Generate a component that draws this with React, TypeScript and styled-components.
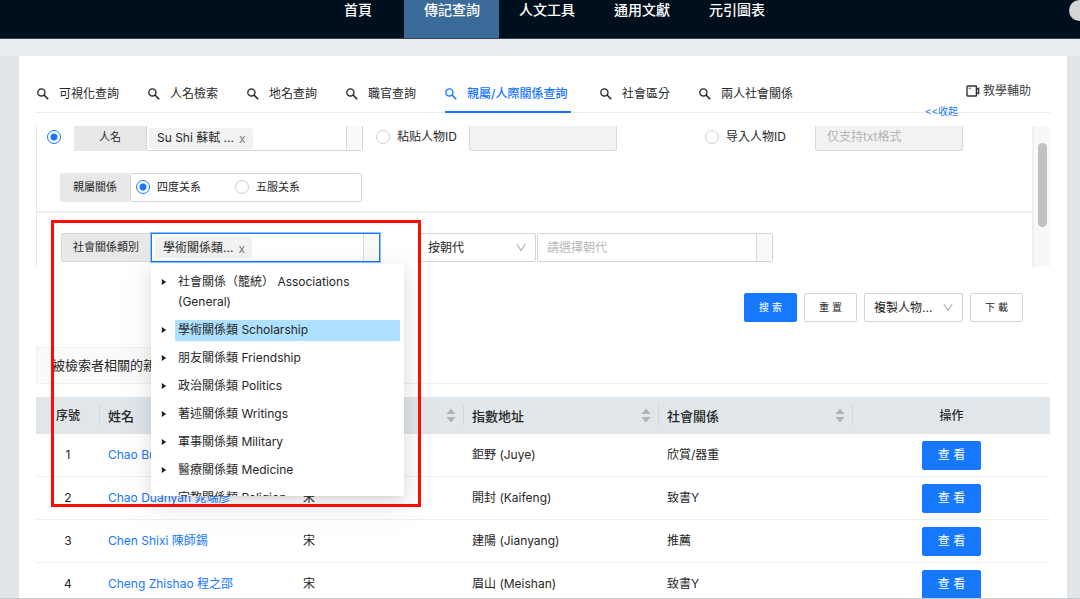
import React from "react";
import styled, { createGlobalStyle, css } from "styled-components";

const GlobalStyle = createGlobalStyle`
  *, *::before, *::after { box-sizing: border-box; }
  html, body { height: 100%; }
  body {
    margin: 0;
    background: #e0e5e9;
    color: #262626;
    font-family: Inter, "Noto Sans CJK TC", "Noto Sans CJK SC", sans-serif;
    font-size: 12px;
    line-height: 20px;
  }
  #root { height: 100%; }
  button, input, select { font: inherit; color: inherit; }
`;

const Page = styled.div`
  position: relative;
  height: 100%;
  overflow: hidden;
  border-bottom: 1px solid #c8cbce;
`;

const Header = styled.header`
  position: relative;
  height: 39px;
  padding-left: 30%;
  background: #000f1e;
  border-bottom: 1px solid #3a4552;
  overflow: hidden;
`;

const Nav = styled.nav`
  display: flex;
  height: 100%;
`;

const NavLink = styled.a<{ $active?: boolean }>`
  padding: 0 19px 18px 20px;
  font-size: 14px;
  font-weight: 500;
  line-height: 20px;
  color: #fff;
  text-decoration: none;
  background: ${(p) => (p.$active ? "#3b6b99" : "transparent")};
  &:first-child { margin-right: 13px; }
`;

const Avatar = styled.span`
  position: absolute;
  top: 0;
  right: -10px;
  width: 21px;
  height: 21px;
  border-radius: 50%;
  background: #d2d4d6;
`;

const Band = styled.div`
  height: 17px;
  background: #e9edf1;
`;

const Card = styled.main`
  margin: 0 13px 0 19px;
  padding: 24px 17px 0;
  background: #fff;
`;

const TabBar = styled.div`
  display: flex;
  align-items: flex-start;
  height: 33px;
  padding-left: 1px;
  border-bottom: 1px solid #ececec;
`;

const Tab = styled.a<{ $active?: boolean }>`
  display: flex;
  gap: 10px;
  align-items: center;
  height: 33px;
  min-width: ${(p) => (p.$active ? 126 : 0)}px;
  margin-right: 29px;
  padding-bottom: 4px;
  white-space: nowrap;
  text-decoration: none;
  color: ${(p) => (p.$active ? "#1677ff" : "#262626")};
  font-weight: ${(p) => (p.$active ? 500 : 400)};
  border-bottom: 2px solid ${(p) => (p.$active ? "#1677ff" : "transparent")};
  svg { width: 12px; height: 12px; }
`;

const TabSide = styled.div`
  display: flex;
  flex-direction: column;
  align-items: flex-end;
  margin-left: auto;
  padding: 1px 19px 0 0;
`;

const HelpLink = styled.a`
  display: flex;
  gap: 3px;
  align-items: center;
  color: #434343;
  text-decoration: none;
  white-space: nowrap;
  svg { width: 14px; height: 12px; }
`;

const Collapse = styled.button`
  margin-right: 73px;
  padding: 0;
  border: 0;
  background: none;
  font-size: 10px;
  line-height: 20px;
  white-space: nowrap;
  color: #1677ff;
`;

const Filters = styled.form`
  margin-top: 13px;
`;

const FilterScroll = styled.div`
  display: flex;
  height: 141px;
`;

const FilterRows = styled.div`
  flex: 1;
  min-width: 0;
  border-left: 1px solid #e8e8e8;
`;

const ScrollTrack = styled.div`
  width: 18px;
  padding: 17px 3px 0 4px;
  border-left: 2px solid #efefef;
  background: #f8f8f8;
`;

const ScrollThumb = styled.div`
  height: 84px;
  border-radius: 5px;
  background: #c1c1c1;
`;

const PersonRow = styled.div`
  display: flex;
  height: 25px;
  padding-left: 10px;
`;

const KinRow = styled.div`
  display: flex;
  height: 38px;
  margin-top: 22px;
  padding-left: 23px;
`;

const PersonGroup = styled.div<{ $width: number; $gap?: number }>`
  display: flex;
  gap: ${(p) => p.$gap ?? 0}px;
  width: ${(p) => p.$width}px;
`;

const Radio = styled.input`
  appearance: none;
  flex: none;
  width: 14px;
  height: 14px;
  margin: 0;
  border: 1px solid #d0d0d0;
  border-radius: 50%;
  background: #fff;
  &:checked {
    border-color: #1677ff;
    background: radial-gradient(circle, #1677ff 3px, #fff 4px);
  }
`;

const PersonLabel = styled.label`
  width: 72px;
  margin-left: 13px;
  height: 25px;
  font-size: 11px;
  line-height: 22px;
  text-align: center;
  background: #e8e8e8;
`;

const RadioLabel = styled.label`
  display: flex;
  align-items: center;
  gap: 7px;
  height: 22px;
  white-space: nowrap;
`;

const DisabledInput = styled.input`
  width: 148px;
  height: 25px;
  padding: 0 11px 4px;
  border: 1px solid #d9d9d9;
  border-top: 0;
  border-radius: 0 0 3px 3px;
  background: #f2f2f2;
  &::placeholder { color: #b4b4b4; opacity: 1; }
`;

const TagSelect = styled.div<{ $cut?: boolean; $focus?: boolean }>`
  position: relative;
  display: flex;
  align-items: center;
  border: 1px solid #d4d4d4;
  background: #fff;
  ${(p) => p.$cut && css`
    width: 217px;
    height: 25px;
    padding-left: 2px;
    border-top: 0;
    border-radius: 0 0 3px 3px;
  `}
  ${(p) => p.$focus && css`
    width: 229px;
    height: 29px;
    padding-left: 3px;
    border-color: #1677ff;
    box-shadow: 0 0 0 1px #8fc0ff;
  `}
`;

const Tag = styled.span`
  display: flex;
  gap: 5px;
  align-items: center;
  height: 21px;
  padding: 0 7px 0 8px;
  border-radius: 2px;
  background: #f2f2f2;
  white-space: nowrap;
`;

const TagRemove = styled.button`
  padding: 2px 0 0;
  border: 0;
  background: none;
  line-height: 18px;
  color: #7a7a7a;
`;

const BareInput = styled.input`
  flex: 1;
  min-width: 0;
  height: 100%;
  padding: 0 0 0 9px;
  border: 0;
  outline: 0;
  background: none;
  &::placeholder { color: #b8b8b8; opacity: 1; }
`;

const Addon = styled.span`
  flex: none;
  align-self: stretch;
  width: 16px;
  border-left: 1px solid #d9d9d9;
  background: #f9f9f9;
`;

const FieldLabel = styled.label<{ $wide?: boolean }>`
  width: ${(p) => (p.$wide ? 90 : 70)}px;
  height: 29px;
  font-size: 11px;
  text-align: center;
  white-space: nowrap;
  border-radius: 2px 0 0 2px;
  background: #e8e8e8;
  border: 1px solid ${(p) => (p.$wide ? "#d6d6d6" : "#e8e8e8")};
  line-height: 26px;
`;

const KinOptions = styled.div`
  display: flex;
  align-items: center;
  gap: 34px;
  width: 232px;
  height: 29px;
  padding: 0 0 2px 5px;
  border: 1px solid #d4d4d4;
  border-radius: 3px;
  font-size: 11px;
`;

const AssocRow = styled.div`
  display: flex;
  padding: 20px 0 0 24px;
  border-top: 2px solid #efefef;
`;

const SelectWrap = styled.span<{ $width: number }>`
  position: relative;
  display: flex;
  width: ${(p) => p.$width}px;
  height: 29px;
  svg {
    position: absolute;
    top: 10px;
    right: 10px;
    width: 10px;
    height: 9px;
    pointer-events: none;
  }
`;

const Select = styled.select`
  appearance: none;
  width: 100%;
  height: 100%;
  padding: 0 20px 0 9px;
  border: 1px solid #d4d4d4;
  border-radius: 2px;
  background: #fff;
`;

const DynastySelect = styled(SelectWrap)`
  margin-left: 38px;
`;

const DynastyInput = styled.div`
  display: flex;
  width: 236px;
  height: 29px;
  margin-left: 1px;
  border: 1px solid #d4d4d4;
  border-radius: 2px;
`;

const Menu = styled.ul`
  position: absolute;
  z-index: 2;
  top: 30px;
  left: -1px;
  width: 253px;
  height: 232px;
  margin: 0;
  padding: 8px 4px 0 9px;
  overflow: hidden;
  list-style: none;
  background: #fff;
  box-shadow: 0 3px 6px -4px rgba(0, 0, 0, 0.12), 0 6px 16px rgba(0, 0, 0, 0.08), 0 9px 28px 8px rgba(0, 0, 0, 0.05);
`;

const MenuItem = styled.li`
  display: flex;
  margin-bottom: 7px;
  svg { flex: none; width: 6px; height: 8px; margin: 6px 8px 0 1px; }
`;

const MenuText = styled.span<{ $selected?: boolean }>`
  flex: 1;
  padding: 0 3px 1px;
  border-radius: 1px;
  background: ${(p) => (p.$selected ? "#aee0ff" : "transparent")};
`;

const Actions = styled.div`
  display: flex;
  justify-content: flex-end;
  gap: 7px;
  margin-top: 26px;
  padding-right: 27px;
`;

const Button = styled.button<{ $primary?: boolean; $table?: boolean }>`
  width: ${(p) => (p.$table ? 59 : 53)}px;
  height: 29px;
  padding: 0 0 1px;
  border: 1px solid ${(p) => (p.$primary ? "#1677ff" : "#d4d4d4")};
  border-radius: 2px;
  background: ${(p) => (p.$primary ? "#1677ff" : "#fff")};
  color: ${(p) => (p.$primary ? "#fff" : "#262626")};
  font-size: ${(p) => (p.$table ? 12 : 10)}px;
  line-height: 20px;
  white-space: pre;
  vertical-align: middle;
`;

const ResultTabs = styled.div`
  display: flex;
  margin-top: 25px;
  border-bottom: 1px solid #f0f0f0;
`;

const ResultTab = styled.h2`
  margin: 0;
  padding: 0 15px;
  border: 1px solid #f0f0f0;
  border-bottom: 0;
  background: #fafafa;
  font-size: 13px;
  font-weight: 400;
  line-height: 35px;
`;

const Table = styled.table`
  width: 100%;
  margin-top: 13px;
  table-layout: fixed;
  border-collapse: separate;
  border-spacing: 0;
`;

const Th = styled.th<{ $center?: boolean }>`
  position: relative;
  height: 37px;
  padding: 0 8px;
  background: #e0e6ea;
  font-size: ${(p) => (p.$center ? 12 : 13)}px;
  font-weight: 500;
  text-align: ${(p) => (p.$center ? "center" : "left")};
  &:not(:last-child)::after {
    content: "";
    position: absolute;
    top: 8px;
    right: 0;
    width: 1px;
    height: 20px;
    background: #d0d5d9;
  }
`;

const HeadCell = styled.span`
  display: flex;
  align-items: center;
  justify-content: space-between;
  svg { width: 10px; height: 15px; }
`;

const Td = styled.td<{ $center?: boolean }>`
  height: 43px;
  padding: 0 8px;
  border-bottom: 1px solid #efefef;
  text-align: ${(p) => (p.$center ? "center" : "left")};
  white-space: nowrap;
  a { color: #1677ff; text-decoration: none; }
`;

const Highlight = styled.div`
  position: absolute;
  z-index: 3;
  top: 220px;
  left: 51px;
  width: 370px;
  height: 287px;
  border: 3px solid #fb0d05;
  pointer-events: none;
`;

const SearchIcon = () => (
  <svg viewBox="0 0 12 12" fill="none" stroke="currentColor" strokeWidth="1.3" aria-hidden="true">
    <circle cx="4.4" cy="4.4" r="3.6" />
    <path d="M7 7l4.2 4.2" strokeWidth="1.6" />
  </svg>
);

const VideoIcon = () => (
  <svg viewBox="0 0 14 12" fill="none" stroke="#333" aria-hidden="true">
    <rect x="1" y="1" width="9.4" height="10" rx="0.6" strokeWidth="1.4" />
    <path d="M2.8 3.2h2" strokeWidth="1" />
    <path d="M10.4 4.3l2.2-.9v5.2l-2.2-.9" strokeWidth="1.4" />
  </svg>
);

const ChevronIcon = () => (
  <svg viewBox="0 0 10 9" fill="none" stroke="#b0b0b0" strokeWidth="1.1" aria-hidden="true">
    <path d="M.8 1l4.2 6.4L9.2 1" />
  </svg>
);

const CaretIcon = () => (
  <svg viewBox="0 0 6 8" fill="#222" aria-hidden="true">
    <path d="M.8 1l4.4 3-4.4 3z" />
  </svg>
);

const SortIcon = () => (
  <svg viewBox="0 0 10 15" fill="#b0b3b5" aria-hidden="true">
    <path d="M5 .5L9.6 6H.4zM5 14.5L9.6 9H.4z" />
  </svg>
);

const navItems = ["首頁", "傳記查詢", "人文工具", "通用文獻", "元引圖表"];
const tabs = ["可視化查詢", "人名檢索", "地名查詢", "職官查詢", "親屬/人際關係查詢", "社會區分", "兩人社會關係"];
const categories = [
  "社會關係（籠統） Associations (General)",
  "學術關係類 Scholarship",
  "朋友關係類 Friendship",
  "政治關係類 Politics",
  "著述關係類 Writings",
  "軍事關係類 Military",
  "醫療關係類 Medicine",
  "宗教關係類 Religion",
];
const rows = [
  ["Chao Buzhi 晁補之", "宋", "鉅野 (Juye)", "欣賞/器重"],
  ["Chao Duanyan 晁端彥", "宋", "開封 (Kaifeng)", "致書Y"],
  ["Chen Shixi 陳師錫", "宋", "建陽 (Jianyang)", "推薦"],
  ["Cheng Zhishao 程之邵", "宋", "眉山 (Meishan)", "致書Y"],
];

export default function App() {
  return (
    <Page>
      <GlobalStyle />
      <Header>
        <Nav>
          {navItems.map((item, i) => (
            <NavLink key={item} href="#" $active={i === 1}>{item}</NavLink>
          ))}
        </Nav>
        <Avatar />
      </Header>
      <Band />
      <Card>
        <TabBar>
          {tabs.map((tab, i) => (
            <Tab key={tab} href="#" $active={i === 4}>
              <SearchIcon />
              {tab}
            </Tab>
          ))}
          <TabSide>
            <HelpLink href="#"><VideoIcon />教學輔助</HelpLink>
            <Collapse type="button">&lt;&lt;收起</Collapse>
          </TabSide>
        </TabBar>

        <Filters onSubmit={(e) => e.preventDefault()}>
          <FilterScroll>
            <FilterRows>
              <PersonRow>
                <PersonGroup $width={329}>
                  <RadioLabel>
                    <Radio type="radio" name="source" defaultChecked aria-label="人名" />
                  </RadioLabel>
                  <PersonLabel htmlFor="person">人名</PersonLabel>
                  <TagSelect $cut>
                    <Tag>Su Shi 蘇軾 ...<TagRemove type="button">x</TagRemove></Tag>
                    <BareInput id="person" />
                    <Addon />
                  </TagSelect>
                </PersonGroup>
                <PersonGroup $width={329} $gap={12}>
                  <RadioLabel><Radio type="radio" name="source" />粘贴人物ID</RadioLabel>
                  <DisabledInput disabled aria-label="粘贴人物ID" />
                </PersonGroup>
                <PersonGroup $width={260} $gap={29}>
                  <RadioLabel><Radio type="radio" name="source" />导入人物ID</RadioLabel>
                  <DisabledInput disabled aria-label="导入人物ID" placeholder="仅支持txt格式" />
                </PersonGroup>
              </PersonRow>
              <KinRow>
                <FieldLabel as="span">親屬關係</FieldLabel>
                <KinOptions role="radiogroup" aria-label="親屬關係">
                  <RadioLabel><Radio type="radio" name="kin" defaultChecked />四度关系</RadioLabel>
                  <RadioLabel><Radio type="radio" name="kin" />五服关系</RadioLabel>
                </KinOptions>
              </KinRow>
              <AssocRow>
                <FieldLabel $wide htmlFor="assoc">社會關係類別</FieldLabel>
                <TagSelect $focus>
                  <Tag>學術關係類...<TagRemove type="button">x</TagRemove></Tag>
                  <BareInput id="assoc" />
                  <Addon />
                  <Menu>
                    {categories.map((name, i) => (
                      <MenuItem key={name}>
                        <CaretIcon />
                        <MenuText $selected={i === 1}>{name}</MenuText>
                      </MenuItem>
                    ))}
                  </Menu>
                </TagSelect>
                <DynastySelect $width={118}>
                  <Select aria-label="年代類型"><option>按朝代</option></Select>
                  <ChevronIcon />
                </DynastySelect>
                <DynastyInput>
                  <BareInput aria-label="朝代" placeholder="請選擇朝代" />
                  <Addon />
                </DynastyInput>
              </AssocRow>
            </FilterRows>
            <ScrollTrack><ScrollThumb /></ScrollTrack>
          </FilterScroll>
          <Actions>
            <Button type="submit" $primary>搜 索</Button>
            <Button type="reset">重 置</Button>
            <SelectWrap $width={99}>
              <Select aria-label="複製人物"><option>複製人物...</option></Select>
              <ChevronIcon />
            </SelectWrap>
            <Button type="button">下 載</Button>
          </Actions>
        </Filters>

        <ResultTabs><ResultTab>被檢索者相關的親屬/人際關係</ResultTab></ResultTabs>
        <Table>
          <colgroup>
            <col width="64" />
            <col width="195" />
            <col width="169" />
            <col width="195" />
            <col width="194" />
            <col />
          </colgroup>
          <thead>
            <tr>
              <Th $center>序號</Th>
              <Th>姓名</Th>
              <Th><HeadCell>朝代<SortIcon /></HeadCell></Th>
              <Th><HeadCell>指數地址<SortIcon /></HeadCell></Th>
              <Th><HeadCell>社會關係<SortIcon /></HeadCell></Th>
              <Th $center>操作</Th>
            </tr>
          </thead>
          <tbody>
            {rows.map(([name, dynasty, place, relation], i) => (
              <tr key={name}>
                <Td $center>{i + 1}</Td>
                <Td><a href="#">{name}</a></Td>
                <Td>{dynasty}</Td>
                <Td>{place}</Td>
                <Td>{relation}</Td>
                <Td $center><Button type="button" $primary $table>查 看</Button></Td>
              </tr>
            ))}
          </tbody>
        </Table>
      </Card>
      <Highlight />
    </Page>
  );
}
